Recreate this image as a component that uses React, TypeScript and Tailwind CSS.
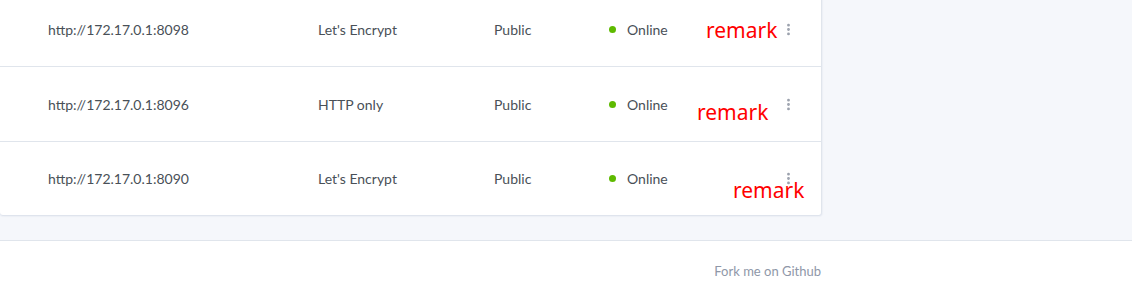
import { EllipsisVertical } from 'lucide-react'

interface Row {
  url: string
  ssl: string
  access: string
  status: string
  remark: string
}

const rows: Row[] = [
  { url: 'http://172.17.0.1:8098', ssl: "Let's Encrypt", access: 'Public', status: 'Online', remark: 'left-[706px] top-[20px]' },
  { url: 'http://172.17.0.1:8096', ssl: 'HTTP only', access: 'Public', status: 'Online', remark: 'left-[697px] top-[102px]' },
  { url: 'http://172.17.0.1:8090', ssl: "Let's Encrypt", access: 'Public', status: 'Online', remark: 'left-[733px] top-[180px]' },
]

const App = () => {
  return (
    <div className="relative min-h-[302px] bg-[#f5f7fb] font-['Lato',sans-serif] text-[14px] text-[#495057] overflow-hidden">
      <div className="w-[822px] -mt-[8px] bg-white rounded-b-[3px] shadow-[0_1px_2px_rgba(0,40,100,0.12)] border-r border-[#e0e5ec]">
        {rows.map((row, i) => (
          <div
            key={row.url}
            className={`flex items-center ${i < rows.length - 1 ? 'h-[75px] border-b border-[#e0e5ec]' : 'h-[73px]'}`}
          >
            <div className="w-[318px] pl-[48px]">{row.url}</div>
            <div className="w-[176px]">{row.ssl}</div>
            <div className="w-[115px]">{row.access}</div>
            <div className="w-[172px] flex items-center gap-[11px]">
              <span className="w-[7px] h-[7px] rounded-full bg-[#5eba00]" />
              <span>{row.status}</span>
            </div>
            <EllipsisVertical size={15} strokeWidth={2.5} className="text-[#9aa0ac]" />
          </div>
        ))}
      </div>

      <footer className="mt-[25px] bg-white border-t border-[#e0e5ec] h-[62px] w-full">
        <div className="w-[821px] flex justify-end pt-[21px] text-[13px] text-[#8f97a8]">
          Fork me on Github
        </div>
      </footer>

      {rows.map((row) => (
        <span
          key={row.remark}
          className={`absolute ${row.remark} font-['Noto_Sans',sans-serif] text-[21px] leading-none text-[#ff0000]`}
        >
          remark
        </span>
      ))}
    </div>
  )
}

export default App
